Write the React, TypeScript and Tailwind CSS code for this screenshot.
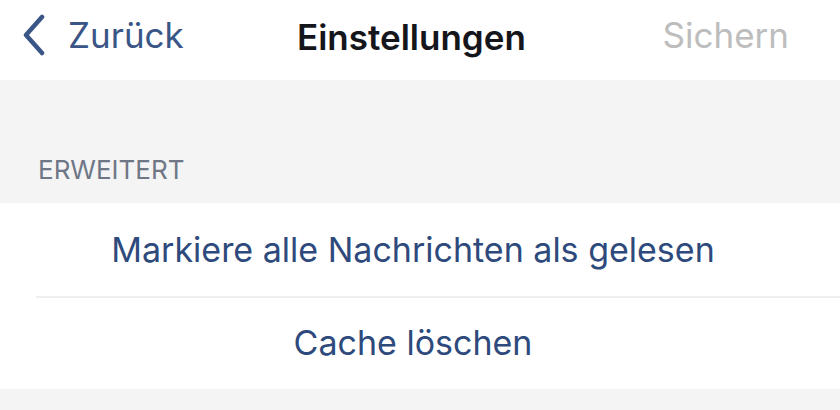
import React from 'react';

const actions = ['Markiere alle Nachrichten als gelesen', 'Cache löschen'];

export default function App() {
  return (
    <div className="w-[840px] h-[410px] overflow-hidden bg-[#f4f4f4] font-['Inter',sans-serif]">
      {/* Navigation bar */}
      <header className="relative h-[80px] bg-white flex items-center justify-between pl-[22px] pr-[51px] pb-[10px]">
        <button className="flex items-center gap-[22px] text-[#3a5687] text-[35px]">
          <svg width="24" height="42" viewBox="0 0 24 42" fill="none" stroke="currentColor" strokeWidth="4.5" strokeLinecap="round" strokeLinejoin="round">
            <polyline points="20,3 4,21 20,39" />
          </svg>
          <span>Zurück</span>
        </button>
        <h1 className="absolute left-[297px] top-[11px] text-[35px] font-semibold text-[#15151c]">Einstellungen</h1>
        <button className="text-[35px] text-[#bdbdbd]">Sichern</button>
      </header>

      {/* Section header */}
      <div className="h-[123px] flex items-end pl-[38px] pb-[14px]">
        <span className="text-[26px] text-[#6f7787]">ERWEITERT</span>
      </div>

      {/* Action rows */}
      <div className="bg-white">
        {actions.map((label, i) => (
          <div key={label} className="relative h-[93px] flex items-center justify-center pr-[14px]">
            {i > 0 && <div className="absolute top-0 left-[36px] right-0 h-[2px] bg-[#eeeeee]" />}
            <span className="text-[34px] text-[#2e4a7c]">{label}</span>
          </div>
        ))}
      </div>
    </div>
  );
}
